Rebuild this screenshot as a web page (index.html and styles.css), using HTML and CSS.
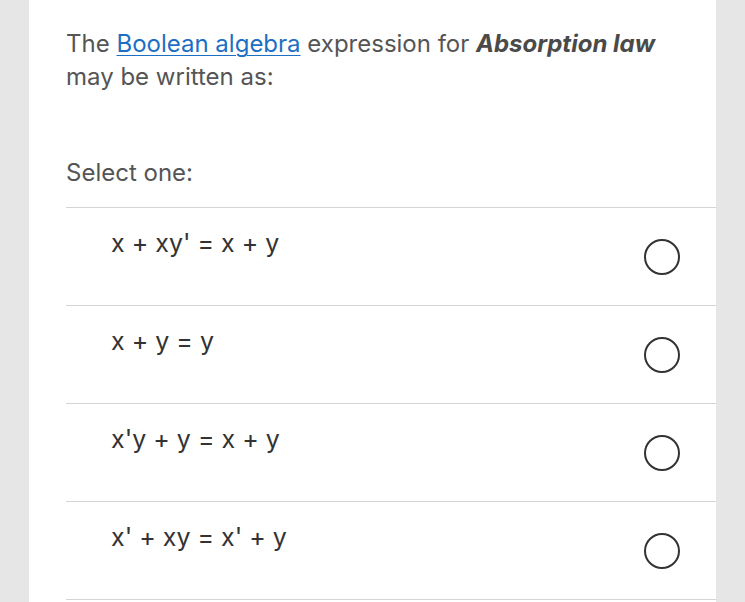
FILE: index.html
```html
<!DOCTYPE html>
<html>
<head>
<meta charset="utf-8">
<link rel="stylesheet" href="styles.css">
</head>
<body>
<div class="page">
  <div class="card">
    <p class="question">The <a href="#" class="link">Boolean algebra</a> expression for <b><i>Absorption law</i></b> may be written as:</p>
    <div class="prompt">Select one:</div>
    <div class="options">
      <div class="option"><span class="label">x + xy' = x + y</span><span class="radio"></span></div>
      <div class="option"><span class="label">x + y = y</span><span class="radio"></span></div>
      <div class="option"><span class="label">x'y + y = x + y</span><span class="radio"></span></div>
      <div class="option"><span class="label">x' + xy = x' + y</span><span class="radio"></span></div>
    </div>
  </div>
</div>
</body>
</html>
```
FILE: styles.css
```css
html, body {
  margin: 0;
  padding: 0;
  background: #e6e6e6;
}
.page {
  width: 745px;
  height: 602px;
  overflow: hidden;
  padding: 0 29px;
  box-sizing: border-box;
}
.card {
  background: #ffffff;
  width: 687px;
  height: 602px;
  padding: 27px 0 0 37px;
  box-sizing: border-box;
  font-family: Inter, Roboto, "Liberation Sans", sans-serif;
}
.question {
  margin: 0;
  font-size: 24px;
  line-height: 33px;
  color: #555555;
  padding-right: 20px;
}
.link {
  color: #1d6fc4;
  text-decoration: underline;
  text-underline-offset: 3px;
  text-decoration-thickness: 1px;
}
.question b {
  color: #4a4a4a;
}
.prompt {
  margin-top: 64px;
  font-size: 24px;
  line-height: 32px;
  color: #555555;
}
.options {
  margin-top: 18px;
  border-top: 1px solid #d4d4d4;
}
.option {
  height: 97px;
  border-bottom: 1px solid #d4d4d4;
  display: flex;
  align-items: flex-start;
  padding-left: 45px;
  padding-right: 36px;
}
.label {
  flex: 1;
  font-size: 25px;
  line-height: 32px;
  color: #333333;
  margin-top: 19px;
}
.radio {
  width: 32px;
  height: 32px;
  border: 2px solid #333333;
  border-radius: 50%;
  margin-top: 31px;
}
```
